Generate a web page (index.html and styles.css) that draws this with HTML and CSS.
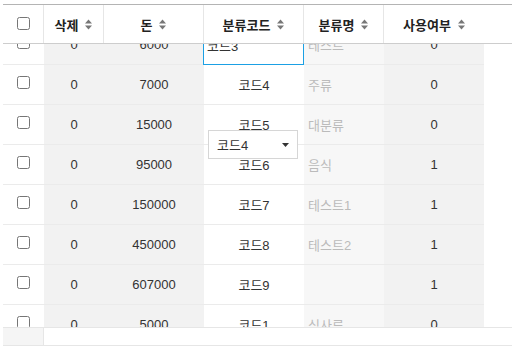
FILE: index.html
```html
<!DOCTYPE html>
<html lang="ko">
<head>
<meta charset="utf-8">
<link rel="stylesheet" href="styles.css">
</head>
<body>
<div class="grid">
  <div class="head">
    <div class="hc c0"><input type="checkbox" class="cb-h"></div>
    <div class="hc c1"><span>삭제</span><svg class="sort" width="7" height="11" viewBox="0 0 7 11"><polygon points="0,4.5 3.5,0.5 7,4.5"/><polygon points="0,6.5 7,6.5 3.5,10.5"/></svg></div>
    <div class="hc c2"><span>돈</span><svg class="sort" width="7" height="11" viewBox="0 0 7 11"><polygon points="0,4.5 3.5,0.5 7,4.5"/><polygon points="0,6.5 7,6.5 3.5,10.5"/></svg></div>
    <div class="hc c3"><span>분류코드</span><svg class="sort" width="7" height="11" viewBox="0 0 7 11"><polygon points="0,4.5 3.5,0.5 7,4.5"/><polygon points="0,6.5 7,6.5 3.5,10.5"/></svg></div>
    <div class="hc c4"><span>분류명</span><svg class="sort" width="7" height="11" viewBox="0 0 7 11"><polygon points="0,4.5 3.5,0.5 7,4.5"/><polygon points="0,6.5 7,6.5 3.5,10.5"/></svg></div>
    <div class="hc c5"><span>사용여부</span><svg class="sort" width="7" height="11" viewBox="0 0 7 11"><polygon points="0,4.5 3.5,0.5 7,4.5"/><polygon points="0,6.5 7,6.5 3.5,10.5"/></svg></div>
  </div>
  <div class="body">
    <div class="rows">
      <div class="row">
        <div class="bc c0"><input type="checkbox" class="cb"></div>
        <div class="bc c1">0</div>
        <div class="bc c2">6000</div>
        <div class="bc c3 editing"><div class="editor">코드3</div></div>
        <div class="bc c4">테스트</div>
        <div class="bc c5">0</div>
      </div>
      <div class="row">
        <div class="bc c0"><input type="checkbox" class="cb"></div>
        <div class="bc c1">0</div>
        <div class="bc c2">7000</div>
        <div class="bc c3">코드4</div>
        <div class="bc c4">주류</div>
        <div class="bc c5">0</div>
      </div>
      <div class="row">
        <div class="bc c0"><input type="checkbox" class="cb"></div>
        <div class="bc c1">0</div>
        <div class="bc c2">15000</div>
        <div class="bc c3">코드5</div>
        <div class="bc c4">대분류</div>
        <div class="bc c5">0</div>
      </div>
      <div class="row">
        <div class="bc c0"><input type="checkbox" class="cb"></div>
        <div class="bc c1">0</div>
        <div class="bc c2">95000</div>
        <div class="bc c3">코드6</div>
        <div class="bc c4">음식</div>
        <div class="bc c5">1</div>
      </div>
      <div class="row">
        <div class="bc c0"><input type="checkbox" class="cb"></div>
        <div class="bc c1">0</div>
        <div class="bc c2">150000</div>
        <div class="bc c3">코드7</div>
        <div class="bc c4">테스트1</div>
        <div class="bc c5">1</div>
      </div>
      <div class="row">
        <div class="bc c0"><input type="checkbox" class="cb"></div>
        <div class="bc c1">0</div>
        <div class="bc c2">450000</div>
        <div class="bc c3">코드8</div>
        <div class="bc c4">테스트2</div>
        <div class="bc c5">1</div>
      </div>
      <div class="row">
        <div class="bc c0"><input type="checkbox" class="cb"></div>
        <div class="bc c1">0</div>
        <div class="bc c2">607000</div>
        <div class="bc c3">코드9</div>
        <div class="bc c4"></div>
        <div class="bc c5">1</div>
      </div>
      <div class="row">
        <div class="bc c0"><input type="checkbox" class="cb"></div>
        <div class="bc c1">0</div>
        <div class="bc c2">5000</div>
        <div class="bc c3">코드1</div>
        <div class="bc c4">식사류</div>
        <div class="bc c5">0</div>
      </div>
    </div>
  </div>
  <div class="foot">
    <div class="fl"></div>
  </div>
  <div class="dropdown">
    <span>코드4</span>
    <svg class="caret" width="7" height="4" viewBox="0 0 7 4"><polygon points="0,0 7,0 3.5,4"/></svg>
  </div>
</div>
</body>
</html>
```

FILE: styles.css
```css
html, body {
  margin: 0;
  padding: 0;
  background: #fff;
}

body {
  font-family: "Liberation Sans", "Noto Sans CJK KR", sans-serif;
  font-size: 13px;
  color: #333;
}

.grid {
  position: relative;
  margin: 4px 0 0 3px;
}

.head {
  display: flex;
  height: 40px;
  box-sizing: border-box;
  border-top: 1px solid #b4b4b4;
  border-bottom: 1px solid #cdcdcd;
}

.c0 { width: 41px; }
.c1 { width: 60px; }
.c2 { width: 100px; }
.c3 { width: 100px; }
.c4 { width: 80px; }
.c5 { width: 100px; }

.hc {
  box-sizing: border-box;
  flex: none;
  display: flex;
  align-items: center;
  justify-content: center;
  gap: 7px;
  border-right: 1px solid #e6e6e6;
  font-weight: bold;
  color: #222;
}

.hc.c5 {
  border-right: none;
}

.sort {
  fill: #777;
  display: block;
}

.cb-h {
  margin: 0 0 2px 0;
}

.cb {
  margin: 0 0 4px 0;
}

.body {
  height: 283px;
  overflow: hidden;
}

.rows {
  margin-top: -19px;
  width: 481px;
}

.row {
  display: flex;
  height: 40px;
  box-sizing: border-box;
  border-bottom: 1px solid #ebebeb;
}

.bc {
  box-sizing: border-box;
  flex: none;
  display: flex;
  align-items: center;
  justify-content: center;
  white-space: nowrap;
}

.bc.c1, .bc.c2, .bc.c5 {
  background: #f2f2f2;
}

.bc.c4 {
  background: #f7f7f7;
  color: #bbb;
  justify-content: flex-start;
  padding-left: 4px;
}

.editing {
  position: relative;
}

.editor {
  position: absolute;
  left: -1px;
  top: 0;
  width: 101px;
  height: 40px;
  box-sizing: border-box;
  border: 1px solid #1ba0e4;
  background: #fff;
  padding-left: 3px;
  display: flex;
  align-items: center;
}

.foot {
  display: flex;
  height: 19px;
  box-sizing: border-box;
  border-top: 1px solid #e6e6e6;
  border-bottom: 1px solid #e6e6e6;
}

.fl {
  width: 41px;
  box-sizing: border-box;
  background: #f5f5f5;
  border-right: 1px solid #e6e6e6;
}

.dropdown {
  position: absolute;
  left: 205px;
  top: 126px;
  width: 90px;
  height: 29px;
  box-sizing: border-box;
  border: 1px solid #d6d6d6;
  background: #fff;
  padding: 0 8px 0 8px;
  display: flex;
  align-items: center;
  justify-content: space-between;
  color: #333;
}

.caret {
  fill: #333;
  display: block;
}
```
